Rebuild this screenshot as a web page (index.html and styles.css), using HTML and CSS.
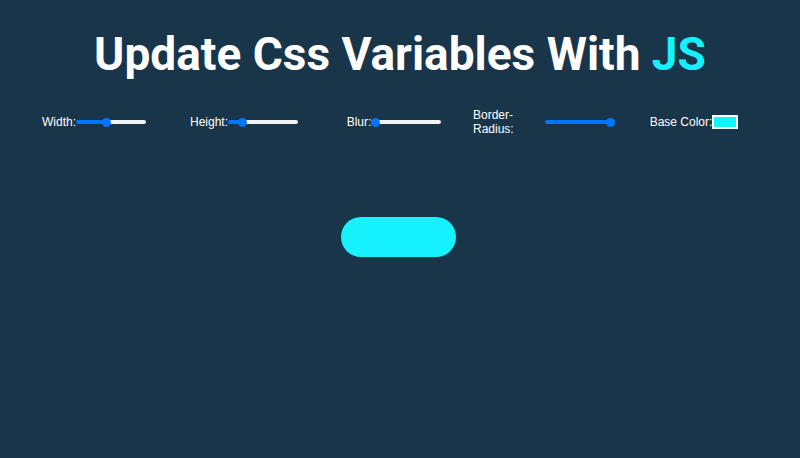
FILE: index.html
```html
<!DOCTYPE html>
<html lang="en">
<head>
    <meta charset="UTF-8">
    <meta name="viewport" content="width=device-width, initial-scale=1.0">
    <title>Update Css Variables With JS</title>
    <link rel="stylesheet" href="styles.css">
</head>
<body>
    <h1>Update Css Variables With <span class="accent">JS</span></h1>

    <div class="controls">
        <div class="control">
            <label for="width">Width:</label>
            <input type="range" id="width" min="10" max="200" value="90" style="--fill: 43%">
        </div>
        <div class="control">
            <label for="height">Height:</label>
            <input type="range" id="height" min="10" max="200" value="40" style="--fill: 17%">
        </div>
        <div class="control">
            <label for="blur">Blur:</label>
            <input type="range" id="blur" min="0" max="25" value="0" style="--fill: 0%">
        </div>
        <div class="control">
            <label for="radius" class="wrap">Border-Radius:</label>
            <input type="range" id="radius" min="0" max="20" value="20" style="--fill: 100%">
        </div>
        <div class="control">
            <label for="base">Base Color:</label>
            <input type="color" id="base" value="#15f2fd">
        </div>
    </div>

    <div class="box"></div>
</body>
</html>
```

FILE: styles.css
```css
:root {
    --base: #15f2fd;
    --width: 115px;
    --height: 40px;
    --radius: 20px;
}

body {
    margin: 0;
    padding: 0;
    background: #193549;
    color: #fff;
    font-family: "Liberation Sans", Arial, sans-serif;
    height: 100vh;
}

h1 {
    text-align: center;
    font-family: Roboto, "Liberation Sans", sans-serif;
    font-size: 46px;
    margin: 0;
    padding-top: 27px;
}

.accent {
    color: var(--base);
}

.controls {
    display: grid;
    grid-template-columns: repeat(5, 150px);
    margin-top: 27px;
    padding-left: 19px;
}

.control {
    display: flex;
    align-items: center;
    justify-content: center;
    font-size: 12px;
}

.control label.wrap {
    width: 72px;
}

input[type="range"] {
    -webkit-appearance: none;
    appearance: none;
    width: 70px;
    height: 9px;
    margin: 0;
    background: transparent;
}

input[type="range"]::-webkit-slider-runnable-track {
    height: 4px;
    border-radius: 2px;
    background: linear-gradient(to right, #0075ff var(--fill), #f2f2f2 var(--fill));
}

input[type="range"]::-webkit-slider-thumb {
    -webkit-appearance: none;
    width: 9px;
    height: 9px;
    margin-top: -2.5px;
    border-radius: 50%;
    background: #0075ff;
}

input[type="color"] {
    width: 26px;
    height: 14px;
    padding: 0;
    margin: 0;
    border: 2px solid #fff;
    background: #fff;
}

input[type="color"]::-webkit-color-swatch-wrapper {
    padding: 0;
}

input[type="color"]::-webkit-color-swatch {
    border: none;
}

.box {
    width: var(--width);
    height: var(--height);
    border-radius: var(--radius);
    background: var(--base);
    margin: 81px auto 0;
    position: relative;
    left: -2px;
}
```
